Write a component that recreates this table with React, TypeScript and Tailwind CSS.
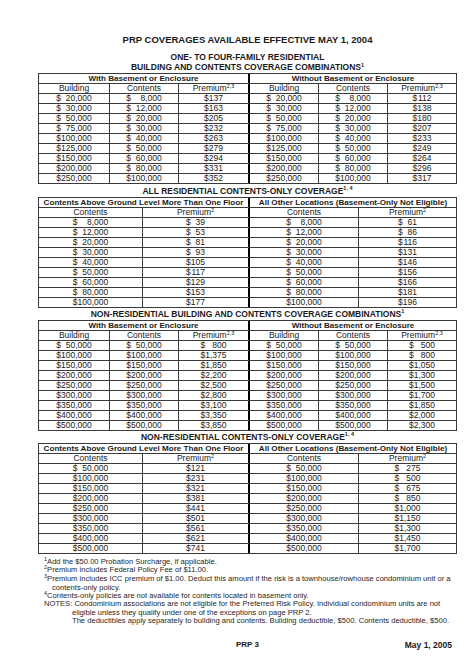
import React from 'react';

const W7 = 'w-[3.62em]';
const W5 = 'w-[2.51em]';
const W3 = 'w-[1.67em]';

const M = ({ v, w }: { v: string; w: string }) => (
  <span className="inline-flex">
    <span>$</span>
    <span className={`${w} text-right`}>{v}</span>
  </span>
);

const Sup = ({ children }: { children: React.ReactNode }) => (
  <sup className="text-[5.5px]">{children}</sup>
);

const COLS6 = 'grid grid-cols-[70px_69px_70px_70px_69px_1fr]';
const COLS4 = 'grid grid-cols-[103px_106px_110px_1fr]';

const Table = ({
  cols,
  mid,
  groups,
  heads,
  rows,
}: {
  cols: string;
  mid: number;
  groups: string[];
  heads: React.ReactNode[];
  rows: React.ReactNode[][];
}) => {
  const span = mid === 3 ? 'col-span-3' : 'col-span-2';
  const all = [heads, ...rows];

  const cellClass = (i: number) =>
    i === 0
      ? 'text-center whitespace-nowrap'
      : i === mid
      ? 'text-center whitespace-nowrap border-l-2 border-l-black'
      : 'text-center whitespace-nowrap border-l border-l-[#3a3a3a]';

  return (
    <div className="border border-[#3a3a3a] text-[8.5px] leading-[9px]">
      <div className={`${cols} h-[10px] border-b border-[#3a3a3a] font-bold text-[8.1px]`}>
        <div className={`${span} text-center whitespace-nowrap`}>{groups[0]}</div>
        <div className={`${span} text-center whitespace-nowrap border-l-2 border-l-black`}>{groups[1]}</div>
      </div>
      {all.map((r, ri) => (
        <div
          key={ri}
          className={
            ri === all.length - 1
              ? `${cols} h-[9px]`
              : `${cols} h-[10px] border-b border-[#3a3a3a]`
          }
        >
          {r.map((c, ci) => (
            <div key={ci} className={cellClass(ci)}>
              {c}
            </div>
          ))}
        </div>
      ))}
    </div>
  );
};

const Heading = ({ h, children }: { h: string; children: React.ReactNode }) => (
  <div className={`${h} flex items-center justify-center font-bold text-[8.5px] leading-[10px] whitespace-nowrap`}>
    {children}
  </div>
);

const resBuilding = ['20,000', '30,000', '50,000', '75,000', '100,000', '125,000', '150,000', '200,000', '250,000'];
const resContents = ['8,000', '12,000', '20,000', '30,000', '40,000', '50,000', '60,000', '80,000', '100,000'];
const resWith = ['137', '163', '205', '232', '263', '279', '294', '331', '352'];
const resWithout = ['112', '138', '180', '207', '233', '249', '264', '296', '317'];

const rcAbove = ['39', '53', '81', '93', '105', '117', '129', '153', '177'];
const rcOther = ['61', '86', '116', '131', '146', '156', '166', '181', '196'];

const nrAmounts = ['50,000', '100,000', '150,000', '200,000', '250,000', '300,000', '350,000', '400,000', '500,000'];
const nrWith = ['800', '1,375', '1,850', '2,200', '2,500', '2,800', '3,100', '3,350', '3,850'];
const nrWithout = ['500', '800', '1,050', '1,300', '1,500', '1,700', '1,850', '2,000', '2,300'];

const ncAbove = ['121', '231', '321', '381', '441', '501', '561', '621', '741'];
const ncOther = ['275', '500', '675', '850', '1,000', '1,150', '1,300', '1,450', '1,700'];

const prem23 = (
  <>
    Premium<Sup>2,3</Sup>
  </>
);
const prem2 = (
  <>
    Premium<Sup>2</Sup>
  </>
);

export default function App() {
  return (
    <div className="w-[474px] h-[657px] bg-white pt-[34px] text-[#1a1a1a] font-['Liberation_Sans',Arial,sans-serif]">
      <div className="ml-[38px] w-[419px]">
        <h1 className="text-center font-bold text-[9.5px] leading-[12px]">
          PRP COVERAGES AVAILABLE EFFECTIVE MAY 1, 2004
        </h1>
        <div className="mt-[6px] text-center font-bold text-[8.5px] leading-[10px]">
          ONE- TO FOUR-FAMILY RESIDENTIAL
          <br />
          BUILDING AND CONTENTS COVERAGE COMBINATIONS<Sup>1</Sup>
        </div>

        <div className="mt-[1px]">
          <Table
            cols={COLS6}
            mid={3}
            groups={['With Basement or Enclosure', 'Without Basement or Enclosure']}
            heads={['Building', 'Contents', prem23, 'Building', 'Contents', prem23]}
            rows={resBuilding.map((b, i) => [
              <M v={b} w={W7} />,
              <M v={resContents[i]} w={W7} />,
              <M v={resWith[i]} w={W3} />,
              <M v={b} w={W7} />,
              <M v={resContents[i]} w={W7} />,
              <M v={resWithout[i]} w={W3} />,
            ])}
          />
        </div>

        <Heading h="h-[13px]">
          ALL RESIDENTIAL CONTENTS-ONLY COVERAGE<Sup>1, 4</Sup>
        </Heading>
        <Table
          cols={COLS4}
          mid={2}
          groups={['Contents Above Ground Level More Than One Floor', 'All Other Locations (Basement-Only Not Eligible)']}
          heads={['Contents', prem2, 'Contents', prem2]}
          rows={resContents.map((c, i) => [
            <M v={c} w={W7} />,
            <M v={rcAbove[i]} w={W3} />,
            <M v={c} w={W7} />,
            <M v={rcOther[i]} w={W3} />,
          ])}
        />

        <Heading h="h-[12px]">
          NON-RESIDENTIAL BUILDING AND CONTENTS COVERAGE COMBINATIONS<Sup>1</Sup>
        </Heading>
        <Table
          cols={COLS6}
          mid={3}
          groups={['With Basement or Enclosure', 'Without Basement or Enclosure']}
          heads={['Building', 'Contents', prem23, 'Building', 'Contents', prem23]}
          rows={nrAmounts.map((a, i) => [
            <M v={a} w={W7} />,
            <M v={a} w={W7} />,
            <M v={nrWith[i]} w={W5} />,
            <M v={a} w={W7} />,
            <M v={a} w={W7} />,
            <M v={nrWithout[i]} w={W5} />,
          ])}
        />

        <Heading h="h-[12px]">
          NON-RESIDENTIAL CONTENTS-ONLY COVERAGE<Sup>1, 4</Sup>
        </Heading>
        <Table
          cols={COLS4}
          mid={2}
          groups={['Contents Above Ground Level More Than One Floor', 'All Other Locations (Basement-Only Not Eligible)']}
          heads={['Contents', prem2, 'Contents', prem2]}
          rows={nrAmounts.map((a, i) => [
            <M v={a} w={W7} />,
            <M v={ncAbove[i]} w={W3} />,
            <M v={a} w={W7} />,
            <M v={ncOther[i]} w={W5} />,
          ])}
        />

        {/* footnotes */}
        <div className="mt-[4px] pl-[6px] text-[7.6px] text-[#262626] whitespace-nowrap">
          <div className="leading-[8px]">
            <Sup>1</Sup>Add the $50.00 Probation Surcharge, if applicable.
          </div>
          <div className="leading-[8px]">
            <Sup>2</Sup>Premium includes Federal Policy Fee of $11.00.
          </div>
          <div className="leading-[9px]">
            <div>
              <Sup>3</Sup>Premium includes ICC premium of $1.00. Deduct this amount if the risk is a townhouse/rowhouse condominium unit or a
            </div>
            <div className="pl-[8px]">contents-only policy.</div>
          </div>
          <div className="leading-[8px]">
            <Sup>4</Sup>Contents-only policies are not available for contents located in basement only.
          </div>
          <div className="leading-[8.7px]">
            <div>NOTES: Condominium associations are not eligible for the Preferred Risk Policy. Individual condominium units are not</div>
            <div className="pl-[28px]">eligible unless they qualify under one of the exceptions on page PRP 2.</div>
            <div className="pl-[28px]">The deductibles apply separately to building and contents. Building deductible, $500. Contents deductible, $500.</div>
          </div>
        </div>

        <div className="mt-[14px] grid grid-cols-3 items-center font-bold leading-[10px]">
          <div />
          <div className="text-center text-[8px]">PRP 3</div>
          <div className="text-right pr-[5px] text-[8.5px]">May 1, 2005</div>
        </div>
      </div>
    </div>
  );
}
